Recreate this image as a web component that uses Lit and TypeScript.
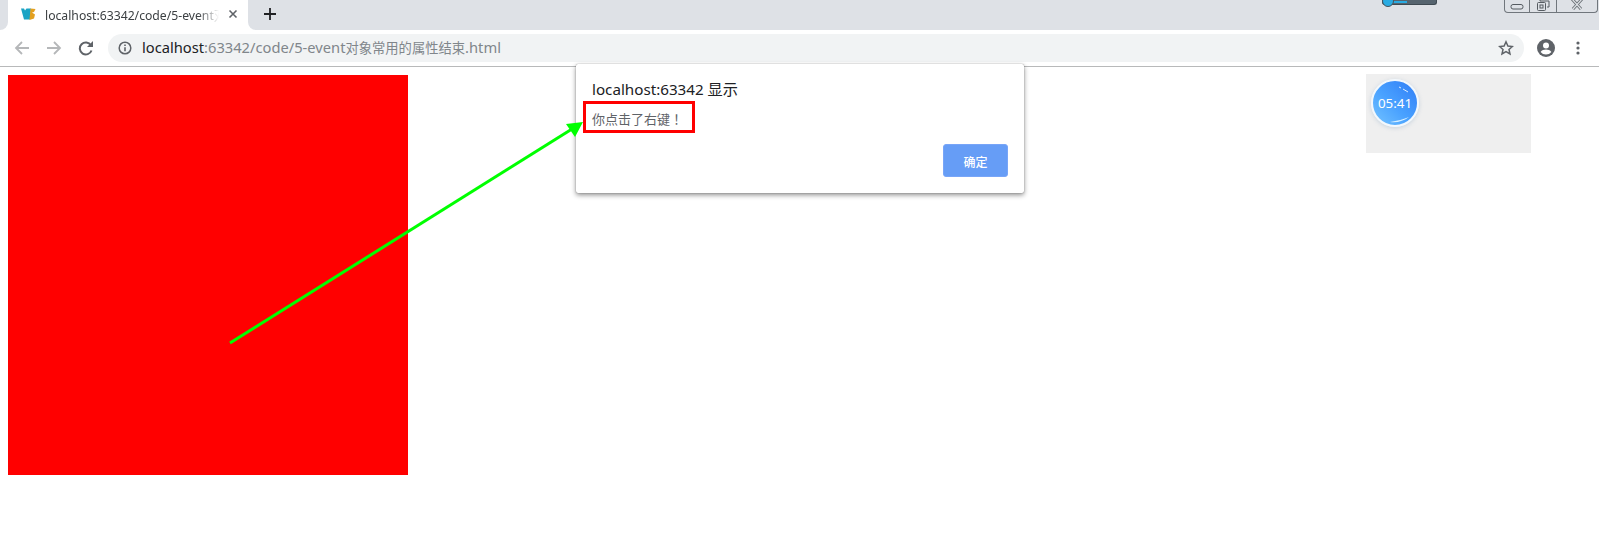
import { LitElement, html, css } from 'lit';
import { customElement } from 'lit/decorators.js';

@customElement('app-root')
export class AppRoot extends LitElement {
  static styles = css`
    :host {
      display: block;
      position: relative;
      height: 551px;
      overflow: hidden;
      background: #fff;
      font-family: "Noto Sans", "Noto Sans CJK SC", sans-serif;
    }
    .strip {
      display: flex;
      height: 30px;
      background: #fff;
    }
    .strip-left {
      width: 8px;
      background: #dee1e6;
      border-bottom-right-radius: 8px;
    }
    .tab {
      width: 240px;
      flex: none;
      display: flex;
      align-items: center;
      padding: 0 0 2px 13px;
      box-sizing: border-box;
    }
    .tab svg {
      flex: none;
    }
    .tab-title {
      width: 174px;
      margin: 0 9px;
      flex: none;
      overflow: hidden;
      white-space: nowrap;
      font-size: 12.2px;
      color: #3c4043;
      -webkit-mask-image: linear-gradient(to right, #000 88%, transparent 100%);
      mask-image: linear-gradient(to right, #000 88%, transparent 100%);
    }
    .cjk {
      font-size: 13.3px;
    }
    .strip-rest {
      flex: 1;
      display: flex;
      align-items: flex-start;
      background: #dee1e6;
      border-bottom-left-radius: 8px;
      padding-left: 16px;
    }
    .plus {
      margin-top: 8px;
    }
    .slider {
      margin-left: 1106px;
      width: 55px;
      height: 5px;
      background: #56646f;
      border: 1px solid #3f4a52;
      border-top: none;
      border-radius: 0 0 3px 3px;
      box-sizing: border-box;
      position: relative;
    }
    .slider i {
      display: block;
      width: 24px;
      height: 2px;
      margin-top: 1px;
      background: #29abe2;
    }
    .slider b {
      position: absolute;
      left: -1px;
      top: -5px;
      width: 12px;
      height: 12px;
      box-sizing: border-box;
      border: 1px solid #46525b;
      border-radius: 50%;
      background: #29abe2;
    }
    .winbtns {
      display: flex;
      margin-left: 67px;
      height: 13px;
      border: 1px solid #70767c;
      border-top: none;
      border-radius: 0 0 4px 4px;
      box-sizing: border-box;
    }
    .winbtns span {
      display: flex;
      align-items: flex-start;
      justify-content: center;
      border-right: 1px solid #70767c;
    }
    .winbtns span:last-child {
      border-right: none;
    }
    .w1 { width: 24px; }
    .w2 { width: 26px; }
    .w3 { width: 40px; }
    .toolbar {
      display: flex;
      align-items: center;
      height: 36px;
      box-sizing: border-box;
      background: #fff;
      padding-left: 14px;
    }
    .nav {
      display: flex;
      gap: 16px;
      align-items: center;
      width: 94px;
      flex: none;
    }
    .nav svg {
      flex: none;
    }
    .omni {
      width: 1416px;
      height: 28px;
      flex: none;
      box-sizing: border-box;
      background: #f1f3f4;
      border-radius: 14px;
      display: flex;
      align-items: center;
      padding: 0 10px;
    }
    .url {
      margin: 0 0 2px 10px;
      font-size: 14.7px;
      color: #80868b;
      white-space: nowrap;
      flex: 1;
    }
    .url b {
      font-weight: 400;
      color: #202124;
    }
    .tools {
      display: flex;
      align-items: center;
      gap: 21px;
      margin-left: 13px;
    }
    .rule {
      height: 1px;
      background: #b8b9ba;
    }
    .page {
      display: flex;
      justify-content: space-between;
      align-items: flex-start;
      padding: 8px 68px 0 8px;
    }
    .red {
      width: 400px;
      height: 400px;
      background: #ff0000;
    }
    .widget {
      width: 165px;
      height: 79px;
      margin-top: -1px;
      background: #efefef;
      padding: 5px;
      box-sizing: border-box;
    }
    .clock {
      position: relative;
      overflow: hidden;
      width: 48px;
      height: 48px;
      box-sizing: border-box;
      border: 2px solid #f2f8fd;
      border-radius: 50%;
      background: linear-gradient(225deg, #2f7df6 0%, #4aa2ff 55%, #74c4ff 100%);
      box-shadow: 0 1px 4px rgba(150, 175, 200, 0.45);
      color: #fff;
      font-size: 13.4px;
      display: flex;
      align-items: center;
      justify-content: center;
    }
    .shine {
      position: absolute;
      left: 0;
      top: 0;
    }
    .dialog {
      position: absolute;
      left: 576px;
      top: 64px;
      width: 448px;
      height: 129px;
      box-sizing: border-box;
      background: #fff;
      border-radius: 2px;
      box-shadow: 0 0 1px rgba(0, 0, 0, 0.5), 0 2px 5px rgba(0, 0, 0, 0.45);
      padding: 15px 16px 16px 16px;
      display: flex;
      flex-direction: column;
    }
    .dialog-title {
      font-size: 15.2px;
      line-height: 20px;
      color: #202124;
    }
    .dialog-msg {
      margin-top: 11px;
      font-size: 13px;
      line-height: 18px;
      color: #5f6368;
    }
    .tc {
      font-family: "Noto Sans CJK TC", sans-serif;
    }
    .dialog-foot {
      margin-top: auto;
      display: flex;
      justify-content: flex-end;
    }
    .ok {
      width: 65px;
      height: 33px;
      padding: 2px 0 0;
      box-sizing: border-box;
      border: 1px solid #78a5f8;
      border-radius: 3px;
      background: #669df6;
      color: #fff;
      font: 500 12px "Noto Sans CJK SC", sans-serif;
    }
    .mark {
      position: absolute;
      left: 583px;
      top: 101px;
      width: 112px;
      height: 32px;
      box-sizing: border-box;
      border: 3px solid #ff0000;
    }
    .arrow {
      position: absolute;
      left: 0;
      top: 0;
    }
  `;

  render() {
    return html`
      <div class="strip">
        <div class="strip-left"></div>
        <div class="tab">
          <svg width="15" height="14" viewBox="0 0 15 14">
            <path d="M0 1.500h3l1 2 1.500-2H10l-1 11H3z" fill="#1ba4c4" />
            <path d="M9.500 1.500l5 .5-1.500 3-2 .5 3 2-1 4-4.500 1.500z" fill="#e3a020" />
          </svg>
          <span class="tab-title">localhost:63342/code/5-event<span class="cjk">对象常用的属性结束</span>.html</span>
          <svg width="10" height="10" viewBox="0 0 10 10">
            <path d="M1.500 1.500l7 7M8.500 1.500l-7 7" stroke="#5f6368" stroke-width="1.600" fill="none" />
          </svg>
        </div>
        <div class="strip-rest">
          <svg class="plus" width="12" height="12" viewBox="0 0 12 12">
            <path d="M6 0v12M0 6h12" stroke="#202124" stroke-width="1.800" fill="none" />
          </svg>
          <div class="slider"><b></b><i></i></div>
          <div class="winbtns">
            <span class="w1">
              <svg width="14" height="10" viewBox="0 0 14 10">
                <rect x="1" y="4.500" width="12" height="4.500" rx="2" fill="none" stroke="#555b61" />
              </svg>
            </span>
            <span class="w2">
              <svg width="14" height="11" viewBox="0 0 14 11">
                <rect x="1.500" y="2.500" width="8" height="8" rx="1" fill="none" stroke="#555b61" />
                <rect x="4" y="5" width="3" height="3" fill="none" stroke="#555b61" />
                <path d="M4 0v1h9v6h-2" fill="none" stroke="#555b61" />
              </svg>
            </span>
            <span class="w3">
              <svg width="14" height="10" viewBox="0 0 14 10">
                <path d="M2 -1l9 10M12 -1L3 9" stroke="#6b7176" stroke-width="3" fill="none" />
                <path d="M2 -1l9 10M12 -1L3 9" stroke="#dee1e6" stroke-width="1.200" fill="none" />
              </svg>
            </span>
          </div>
        </div>
      </div>
      <div class="toolbar">
        <div class="nav">
          <svg width="16" height="16" viewBox="0 0 16 16">
            <path d="M15 8H2M8 2L2 8l6 6" stroke="#b5b7b9" stroke-width="1.800" fill="none" />
          </svg>
          <svg width="16" height="16" viewBox="0 0 16 16">
            <path d="M1 8h13M8 2l6 6-6 6" stroke="#b5b7b9" stroke-width="1.800" fill="none" />
          </svg>
          <svg width="16" height="16" viewBox="0 0 16 16">
            <path d="M13.500 10.500a6 6 0 1 1-.6-5.200" stroke="#5f6368" stroke-width="2" fill="none" />
            <path d="M15 1v6H9z" fill="#5f6368" />
          </svg>
        </div>
        <div class="omni">
          <svg width="14" height="14" viewBox="0 0 14 14">
            <circle cx="7" cy="7" r="5.800" fill="none" stroke="#5f6368" stroke-width="1.500" />
            <path d="M7 6.200v4M7 3.600v1.500" stroke="#5f6368" stroke-width="1.600" />
          </svg>
          <span class="url"><b>localhost</b>:63342/code/5-event<span class="cjk">对象常用的属性结束</span>.html</span>
          <svg width="16" height="16" viewBox="0 0 16 16">
            <path d="M8 1.800l1.900 4.200 4.500.5-3.400 3 1 4.500L8 11.700 4 14l1-4.500-3.400-3 4.500-.5z" fill="none" stroke="#5f6368" stroke-width="1.500" />
          </svg>
        </div>
        <div class="tools">
          <svg width="18" height="18" viewBox="0 0 18 18">
            <circle cx="9" cy="9" r="9" fill="#5f6368" />
            <circle cx="9" cy="6.500" r="3" fill="#fff" />
            <path d="M3.600 13c1.200-2 3.400-2.600 5.400-2.600s4.200.6 5.400 2.600a7 7 0 0 1-10.800 0z" fill="#fff" />
          </svg>
          <svg width="4" height="14" viewBox="0 0 4 14">
            <circle cx="2" cy="2" r="1.600" fill="#5f6368" />
            <circle cx="2" cy="7" r="1.600" fill="#5f6368" />
            <circle cx="2" cy="12" r="1.600" fill="#5f6368" />
          </svg>
        </div>
      </div>
      <div class="rule"></div>
      <div class="page">
        <div class="red"></div>
        <div class="widget">
          <div class="clock">
            <svg class="shine" width="44" height="44" viewBox="0 0 44 44">
              <path d="M26 6l2 1M30 8l5 3" stroke="#dcefff" stroke-width="1" fill="none" />
              <path d="M17 41c7 1 14-1 19-5-5 2-12 4-19 5z" fill="#d6efff" />
            </svg>
            05:41
          </div>
        </div>
      </div>
      <div class="dialog">
        <div class="dialog-title">localhost:63342 显示</div>
        <div class="dialog-msg">你点击了右键<span class="tc">！</span></div>
        <div class="dialog-foot"><button class="ok">确定</button></div>
      </div>
      <div class="mark"></div>
      <svg class="arrow" width="600" height="360" viewBox="0 0 600 360">
        <path d="M230 343L572 129" stroke="#00ff00" stroke-width="3" fill="none" />
        <path d="M583 122L566 124L575 137z" fill="#00ff00" />
      </svg>
    `;
  }
}
